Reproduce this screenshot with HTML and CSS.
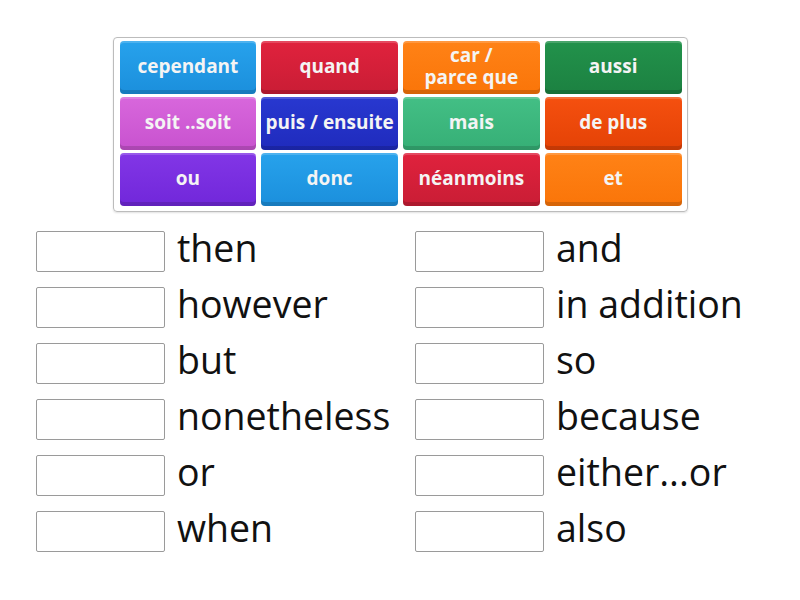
FILE: index.html
```html
<!DOCTYPE html>
<html lang="fr">
<head>
<meta charset="utf-8">
<title>Connecteurs</title>
<link rel="stylesheet" href="styles.css">
</head>
<body>
<div class="page">
  <div class="bank">
    <div class="tile c-blue">cependant</div>
    <div class="tile c-red">quand</div>
    <div class="tile c-orange">car /<br>parce que</div>
    <div class="tile c-green">aussi</div>
    <div class="tile c-pink">soit ..soit</div>
    <div class="tile c-navy">puis / ensuite</div>
    <div class="tile c-teal">mais</div>
    <div class="tile c-redorange">de plus</div>
    <div class="tile c-purple">ou</div>
    <div class="tile c-blue">donc</div>
    <div class="tile c-red">néanmoins</div>
    <div class="tile c-orange">et</div>
  </div>
  <div class="answers">
    <div class="col">
      <div class="row"><div class="slot"></div><span class="word">then</span></div>
      <div class="row"><div class="slot"></div><span class="word">however</span></div>
      <div class="row"><div class="slot"></div><span class="word">but</span></div>
      <div class="row"><div class="slot"></div><span class="word">nonetheless</span></div>
      <div class="row"><div class="slot"></div><span class="word">or</span></div>
      <div class="row"><div class="slot"></div><span class="word">when</span></div>
    </div>
    <div class="col">
      <div class="row"><div class="slot"></div><span class="word">and</span></div>
      <div class="row"><div class="slot"></div><span class="word">in addition</span></div>
      <div class="row"><div class="slot"></div><span class="word">so</span></div>
      <div class="row"><div class="slot"></div><span class="word">because</span></div>
      <div class="row"><div class="slot"></div><span class="word">either...or</span></div>
      <div class="row"><div class="slot"></div><span class="word">also</span></div>
    </div>
  </div>
</div>
</body>
</html>
```
FILE: styles.css
```css
html, body {
  margin: 0;
  padding: 0;
  background: #ffffff;
}
body {
  font-family: "Open Sans", "DejaVu Sans", sans-serif;
  width: 800px;
  height: 600px;
  overflow: hidden;
}
.page {
  padding-top: 37px;
}
.bank {
  box-sizing: border-box;
  width: 575px;
  margin: 0 auto;
  border: 1px solid #bcbcbc;
  border-radius: 4px;
  padding: 3px 5px 5px 6px;
  display: grid;
  grid-template-columns: repeat(4, 1fr);
  grid-auto-rows: 53px;
  gap: 3px 5px;
  box-shadow: 0 1px 2px rgba(0,0,0,0.12);
}
.tile {
  border-radius: 4px;
  display: flex;
  align-items: center;
  justify-content: center;
  text-align: center;
  color: #f4f4f4;
  font-weight: 700;
  font-size: 19px;
  line-height: 22px;
  padding-bottom: 3px;
  box-sizing: border-box;
  white-space: nowrap;
  box-shadow: inset 0 -4px 0 rgba(0,0,0,0.14), inset 0 2px 0 rgba(255,255,255,0.18);
}
.c-blue { background: linear-gradient(#27a2ec, #1b8fdc); }
.c-red { background: linear-gradient(#e0223d, #c91d35); }
.c-orange { background: linear-gradient(#ff8216, #fa7509); }
.c-green { background: linear-gradient(#22924b, #1c8141); }
.c-pink { background: linear-gradient(#d867dc, #c852cf); }
.c-navy { background: linear-gradient(#2838d0, #1f2bbd); }
.c-teal { background: linear-gradient(#43bf85, #36af76); }
.c-redorange { background: linear-gradient(#f5500f, #e44206); }
.c-purple { background: linear-gradient(#8236e6, #7127da); }

.answers {
  display: grid;
  grid-template-columns: 379px 379px;
  margin-top: 19px;
  margin-left: 36px;
}
.col {
  display: flex;
  flex-direction: column;
  gap: 15px;
}
.row {
  display: flex;
  align-items: center;
  height: 41px;
}
.slot {
  box-sizing: border-box;
  width: 129px;
  height: 41px;
  border: 1px solid #9a9a9a;
  border-radius: 2px;
  background: #fff;
  flex: none;
}
.word {
  margin-left: 12px;
  font-size: 37.5px;
  line-height: 41px;
  color: #111111;
  white-space: nowrap;
  position: relative;
  top: -4px;
}
```
